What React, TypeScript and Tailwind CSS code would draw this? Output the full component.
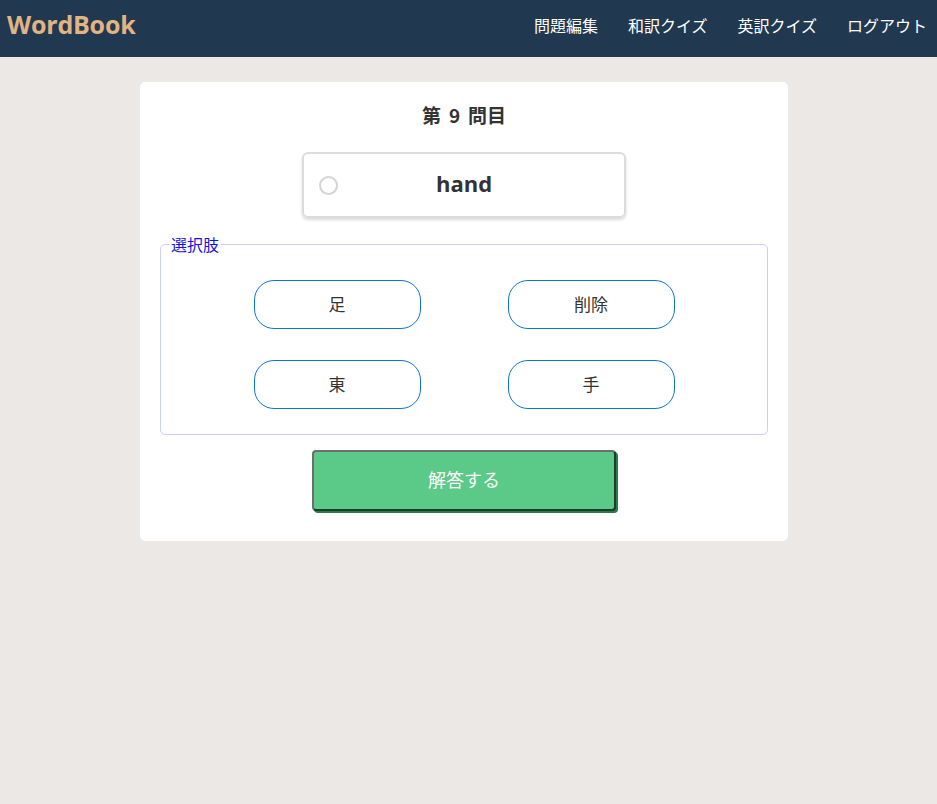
import React from "react";

const jp = { fontFamily: '"Noto Sans CJK JP", "Noto Sans", sans-serif' };

export default function App() {
  const choices = ["足", "削除", "東", "手"];
  return (
    <div className="min-h-[804px] bg-[#ece8e6]" style={jp}>
      <header className="h-[57px] bg-[#213851] flex items-center justify-between pl-[7px] pr-[10px] pb-[7px]">
        <div className="text-[25px] font-bold text-[#e2b482] tracking-[-0.2px]" style={{ fontFamily: '"Open Sans", "Noto Sans", sans-serif' }}>
          WordBook
        </div>
        <nav className="flex gap-[30px] text-[16px] text-white">
          <span>問題編集</span>
          <span>和訳クイズ</span>
          <span>英訳クイズ</span>
          <span>ログアウト</span>
        </nav>
      </header>
      <main className="flex justify-center pt-[25px] pr-[9px]">
        <div className="w-[648px] bg-white rounded-[5px] px-[20px] pt-[20px] pb-[30px] flex flex-col items-center">
          <h1 className="flex gap-[8px] text-[19px] font-bold text-[#333] leading-[26px]">
            <span>第</span>
            <span>9</span>
            <span>問目</span>
          </h1>
          <div className="mt-[24px] w-[324px] h-[66px] rounded-[6px] border-2 border-[#dcdcdc] shadow-[0_2px_3px_rgba(0,0,0,0.15)] flex items-center relative">
            <span className="absolute left-[15px] w-[19px] h-[19px] rounded-full border-2 border-[#d4d4d4] bg-white" />
            <span className="flex-1 text-center text-[22px] font-bold text-[#333] pb-[4px]" style={{ fontFamily: '"Open Sans", "Noto Sans", sans-serif' }}>hand</span>
          </div>
          <fieldset className="mt-[18px] w-full border border-[#c9d0f6] rounded-[5px] px-[8px] pb-[25px]">
            <legend className="px-[2px] text-[16px] leading-[16px] text-[#1414e6]">選択肢</legend>
            <div className="grid grid-cols-[167px_167px] gap-x-[87px] gap-y-[31px] justify-center mt-[28px]">
              {choices.map((c) => (
                <button key={c} className="h-[49px] rounded-[20px] border border-[#0b74d6] bg-white text-[17px] text-[#333] pb-[2px]">
                  {c}
                </button>
              ))}
            </div>
          </fieldset>
          <button className="mt-[15px] w-[304px] h-[61px] rounded-[4px] bg-[#5bc987] border-2 border-[#6e6e6e] border-r-[#1f3c2b] border-b-[#1f3c2b] shadow-[2px_2px_0_#2b7a4b] text-white text-[18px] pb-[2px]">
            解答する
          </button>
        </div>
      </main>
    </div>
  );
}
